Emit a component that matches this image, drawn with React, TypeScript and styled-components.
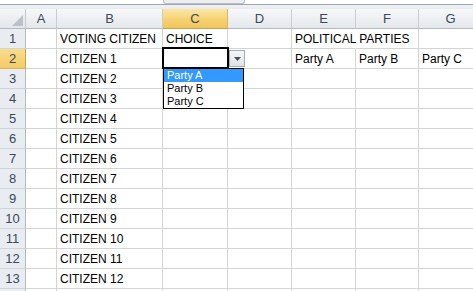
import React from "react";
import styled, { createGlobalStyle, css } from "styled-components";

const GlobalStyle = createGlobalStyle`
  html, body {
    margin: 0;
    padding: 0;
    background: #ffffff;
    overflow: hidden;
  }
  * {
    box-sizing: border-box;
  }
`;

const COLUMNS = [
  { key: "A", width: 31 },
  { key: "B", width: 106 },
  { key: "C", width: 65 },
  { key: "D", width: 64 },
  { key: "E", width: 64 },
  { key: "F", width: 63 },
  { key: "G", width: 64 },
];

const ROW_HEADER_WIDTH = 26;
const SELECTED_COL = "C";
const SELECTED_ROW = 2;
const VISIBLE_ROWS = 13;

type CellMap = Record<string, string>;

const cells: CellMap = {
  B1: "VOTING CITIZEN",
  C1: "CHOICE",
  E1: "POLITICAL PARTIES",
  E2: "Party A",
  F2: "Party B",
  G2: "Party C",
};
for (let i = 1; i <= 12; i++) cells[`B${i + 1}`] = `CITIZEN ${i}`;

// text that runs on into the empty neighbour cell hides the gridline
const spills = new Set(["E1"]);

const PARTIES = ["Party A", "Party B", "Party C"];

const Window = styled.div`
  width: 473px;
  height: 291px;
  overflow: hidden;
  background: #ffffff;
  display: flex;
  flex-direction: column;
`;

const TopStrip = styled.div`
  height: 4px;
  display: flex;
  flex-shrink: 0;
`;

const FormulaTab = styled.div`
  margin-left: 163px;
  width: 82px;
  height: 4px;
  background: #eceef1;
  border-left: 1px solid #b9bec5;
  border-bottom: 1px solid #b9bec5;
  border-right: 1px solid #b9bec5;
  border-bottom-left-radius: 3px;
  border-bottom-right-radius: 3px;
`;

const Rule = styled.div`
  height: 1px;
  background: #9ea4ab;
  flex-shrink: 0;
`;

const Gutter = styled.div`
  height: 4px;
  background: linear-gradient(#f1f3f6, #e6e9ee);
  flex-shrink: 0;
`;

const Sheet = styled.div`
  display: grid;
  grid-template-columns: ${ROW_HEADER_WIDTH}px ${COLUMNS.map((c) => `${c.width}px`).join(" ")};
  grid-auto-rows: 20px;
  font-family: "Liberation Sans", Arial, sans-serif;
`;

const headerBase = css`
  display: flex;
  align-items: center;
  justify-content: center;
  font-family: "Liberation Sans", Arial, sans-serif;
  font-size: 13px;
  color: #3c4859;
`;

const Corner = styled.div`
  ${headerBase};
  position: relative;
  background: linear-gradient(#f5f6f8, #e3e6ea);
  border-right: 1px solid #c4c8ce;
  border-bottom: 1px solid #b4b9c0;
  svg {
    position: absolute;
    right: 2px;
    bottom: 2px;
  }
`;

const ColHeader = styled.div<{ $active?: boolean }>`
  ${headerBase};
  background: ${({ $active }) =>
    $active
      ? "linear-gradient(#fbe6a6, #f6d06e 60%, #f2c55c)"
      : "linear-gradient(#f7f8fa, #e4e7eb)"};
  border-right: 1px solid ${({ $active }) => ($active ? "#d9b65a" : "#c9cdd3")};
  border-bottom: 1px solid ${({ $active }) => ($active ? "#c9a24a" : "#b4b9c0")};
`;

const RowHeader = styled.div<{ $active?: boolean }>`
  ${headerBase};
  background: ${({ $active }) =>
    $active ? "linear-gradient(#f9dd8c, #f4cb66)" : "#e9ecf1"};
  border-right: 1px solid ${({ $active }) => ($active ? "#c9a24a" : "#b4b9c0")};
  border-bottom: 1px solid ${({ $active }) => ($active ? "#d9b65a" : "#d0d4da")};
`;

const Cell = styled.div<{ $selected?: boolean; $spill?: boolean }>`
  position: relative;
  display: flex;
  align-items: center;
  padding: 1px 0 0 3px;
  font-size: 12px;
  color: #000000;
  white-space: nowrap;
  border-right: 1px solid ${({ $spill }) => ($spill ? "transparent" : "#d4d4d4")};
  border-bottom: 1px solid #d4d4d4;
  z-index: ${({ $selected, $spill }) => ($selected ? 2 : $spill ? 1 : "auto")};
`;

const SelectionFrame = styled.div`
  position: absolute;
  left: -1px;
  top: -2px;
  width: 67px;
  height: 22px;
  border: 2px solid #000000;
  pointer-events: none;
`;

const DropButton = styled.div`
  position: absolute;
  left: 66px;
  top: 1px;
  width: 16px;
  height: 17px;
  border: 1px solid #a9adb3;
  background: linear-gradient(#f6f7f8, #dfe2e6);
  display: flex;
  align-items: center;
  justify-content: center;
`;

const List = styled.div`
  position: absolute;
  left: 0;
  top: 19px;
  width: 81px;
  border: 1px solid #000000;
  background: #ffffff;
  display: flex;
  flex-direction: column;
  z-index: 3;
`;

const ListItem = styled.div<{ $highlighted?: boolean }>`
  height: 13px;
  line-height: 13px;
  padding-left: 3px;
  font-family: "Liberation Sans", Arial, sans-serif;
  font-size: 11px;
  color: ${({ $highlighted }) => ($highlighted ? "#ffffff" : "#000000")};
  background: ${({ $highlighted }) => ($highlighted ? "#3399ff" : "transparent")};
`;

const Dropdown = () => (
  <>
    <SelectionFrame />
    <DropButton>
      <svg width="7" height="4" viewBox="0 0 7 4">
        <path d="M0 0H7L3.5 4Z" fill="#4b4f55" />
      </svg>
    </DropButton>
    <List>
      {PARTIES.map((p, i) => (
        <ListItem key={p} $highlighted={i === 0}>
          {p}
        </ListItem>
      ))}
    </List>
  </>
);

export default function App() {
  // one extra row peeks in under the last visible one
  const rows = Array.from({ length: VISIBLE_ROWS + 1 }, (_, i) => i + 1);
  return (
    <>
      <GlobalStyle />
      <Window>
        <TopStrip>
          <FormulaTab />
        </TopStrip>
        <Rule />
        <Gutter />
        <Sheet>
          <Corner>
            <svg width="11" height="11" viewBox="0 0 11 11">
              <path d="M11 0V11H0Z" fill="#bcc1c7" />
            </svg>
          </Corner>
          {COLUMNS.map((c) => (
            <ColHeader key={c.key} $active={c.key === SELECTED_COL}>
              {c.key}
            </ColHeader>
          ))}
          {rows.map((r) => (
            <React.Fragment key={r}>
              <RowHeader $active={r === SELECTED_ROW}>
                {r <= VISIBLE_ROWS ? r : null}
              </RowHeader>
              {COLUMNS.map((c) => {
                const id = `${c.key}${r}`;
                const selected = c.key === SELECTED_COL && r === SELECTED_ROW;
                return (
                  <Cell key={id} $selected={selected} $spill={spills.has(id)}>
                    {cells[id]}
                    {selected && <Dropdown />}
                  </Cell>
                );
              })}
            </React.Fragment>
          ))}
        </Sheet>
      </Window>
    </>
  );
}
